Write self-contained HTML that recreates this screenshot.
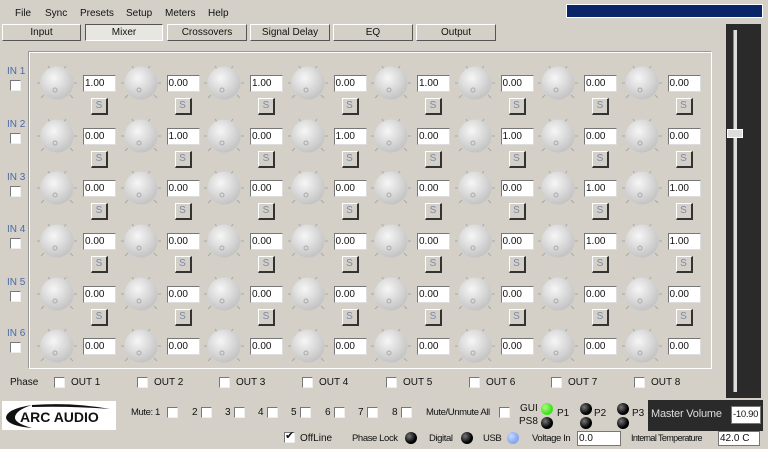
<!DOCTYPE html>
<html><head><meta charset="utf-8"><style>
*{box-sizing:border-box;margin:0;padding:0}
body{width:768px;height:449px;background:#d4d0c8;font-family:"Liberation Sans",sans-serif;font-size:11px;color:#111;position:relative;overflow:hidden}
.a{position:absolute;white-space:nowrap}
.menu span{position:absolute;top:8px;font-size:10px}
.tab{position:absolute;top:24px;height:17px;border:1px solid #fff;border-right-color:#555;border-bottom-color:#555;text-align:center;font-size:10px;line-height:15px;background:#d4d0c8}
.panel{position:absolute;left:29px;top:52px;width:683px;height:317px;border:1px solid #fff;box-shadow:-1px -1px 0 #999}
.grid{position:absolute;left:36px;top:62px;display:grid;grid-template-columns:repeat(8,83.5px);grid-template-rows:repeat(6,52.7px)}
.c{position:relative}
.c svg{position:absolute;left:0;top:0;width:42px;height:42px}
.tb{position:absolute;left:47px;top:13px;width:33px;height:17px;background:#fff;border:1px solid #777;border-right-color:#ddd;border-bottom-color:#ddd;font-size:10px;line-height:15px;padding-left:1px}
.s{position:absolute;left:55px;top:36px;width:17px;height:17px;border:1px solid #fff;border-right:2px solid #333;border-bottom:2px solid #333;color:#7a8aa8;font-size:10px;text-align:center;line-height:14px}
.cb{position:absolute;width:11px;height:11px;background:#fff;border:1px solid #777;border-right-color:#eee;border-bottom-color:#eee}
.in{color:#4a6aa8;font-size:10px}
.led{position:absolute;width:12px;height:12px;border-radius:50%;background:radial-gradient(circle at 35% 35%,#777,#000 60%)}
.n{letter-spacing:-0.4px;font-size:9.5px}
</style></head><body>
<svg width="0" height="0" style="position:absolute"><defs>
<radialGradient id="g" cx="40%" cy="35%" r="65%"><stop offset="0" stop-color="#f6f6f6"/><stop offset="1" stop-color="#c4c4c4"/></radialGradient>
<symbol id="kn" viewBox="0 0 42 42"><g stroke="#a8a8a8" stroke-width="1"><line x1="1" y1="21" x2="4" y2="21"/><line x1="38" y1="21" x2="41" y2="21"/><line x1="12" y1="4" x2="14" y2="7"/><line x1="30" y1="4" x2="28" y2="7"/><line x1="5" y1="36" x2="8" y2="33"/><line x1="37" y1="36" x2="34" y2="33"/></g><circle cx="21" cy="21" r="16.5" fill="url(#g)"/><circle cx="19" cy="28" r="2" fill="none" stroke="#aaa"/></symbol></defs></svg>
<div class="menu"><span style="left:15px">File</span><span style="left:45px">Sync</span><span style="left:80px">Presets</span><span style="left:126px">Setup</span><span style="left:165px">Meters</span><span style="left:208px">Help</span></div>
<div class="a" style="left:566px;top:4px;width:197px;height:14px;background:#0a246a;border:1px solid #fff"></div>
<div class="tab" style="left:2px;width:79px">Input</div>
<div class="tab" style="left:85px;width:78px;background:#e8e6e0;border-color:#555 #fff #fff #555">Mixer</div>
<div class="tab" style="left:167px;width:80px">Crossovers</div>
<div class="tab" style="left:250px;width:80px">Signal Delay</div>
<div class="tab" style="left:333px;width:80px">EQ</div>
<div class="tab" style="left:416px;width:80px">Output</div>
<div class="a" style="left:726px;top:24px;width:35px;height:374px;background:#2a2a2a"></div>
<div class="a" style="left:733px;top:30px;width:4px;height:362px;background:#ddd;border-left:1px solid #888"></div>
<div class="a" style="left:727px;top:129px;width:16px;height:9px;background:#ddd;border:1px solid #fff"></div>
<div class="panel"></div>
<div class="a in" style="left:7px;top:66px">IN 1</div><div class="cb" style="left:10px;top:80px"></div>
<div class="a in" style="left:7px;top:119px">IN 2</div><div class="cb" style="left:10px;top:133px"></div>
<div class="a in" style="left:7px;top:172px">IN 3</div><div class="cb" style="left:10px;top:186px"></div>
<div class="a in" style="left:7px;top:224px">IN 4</div><div class="cb" style="left:10px;top:238px"></div>
<div class="a in" style="left:7px;top:277px">IN 5</div><div class="cb" style="left:10px;top:291px"></div>
<div class="a in" style="left:7px;top:328px">IN 6</div><div class="cb" style="left:10px;top:342px"></div>
<div class="grid">
<div class="c"><svg><use href="#kn"/></svg><div class="tb">1.00</div><div class="s">S</div></div>
<div class="c"><svg><use href="#kn"/></svg><div class="tb">0.00</div><div class="s">S</div></div>
<div class="c"><svg><use href="#kn"/></svg><div class="tb">1.00</div><div class="s">S</div></div>
<div class="c"><svg><use href="#kn"/></svg><div class="tb">0.00</div><div class="s">S</div></div>
<div class="c"><svg><use href="#kn"/></svg><div class="tb">1.00</div><div class="s">S</div></div>
<div class="c"><svg><use href="#kn"/></svg><div class="tb">0.00</div><div class="s">S</div></div>
<div class="c"><svg><use href="#kn"/></svg><div class="tb">0.00</div><div class="s">S</div></div>
<div class="c"><svg><use href="#kn"/></svg><div class="tb">0.00</div><div class="s">S</div></div>
<div class="c"><svg><use href="#kn"/></svg><div class="tb">0.00</div><div class="s">S</div></div>
<div class="c"><svg><use href="#kn"/></svg><div class="tb">1.00</div><div class="s">S</div></div>
<div class="c"><svg><use href="#kn"/></svg><div class="tb">0.00</div><div class="s">S</div></div>
<div class="c"><svg><use href="#kn"/></svg><div class="tb">1.00</div><div class="s">S</div></div>
<div class="c"><svg><use href="#kn"/></svg><div class="tb">0.00</div><div class="s">S</div></div>
<div class="c"><svg><use href="#kn"/></svg><div class="tb">1.00</div><div class="s">S</div></div>
<div class="c"><svg><use href="#kn"/></svg><div class="tb">0.00</div><div class="s">S</div></div>
<div class="c"><svg><use href="#kn"/></svg><div class="tb">0.00</div><div class="s">S</div></div>
<div class="c"><svg><use href="#kn"/></svg><div class="tb">0.00</div><div class="s">S</div></div>
<div class="c"><svg><use href="#kn"/></svg><div class="tb">0.00</div><div class="s">S</div></div>
<div class="c"><svg><use href="#kn"/></svg><div class="tb">0.00</div><div class="s">S</div></div>
<div class="c"><svg><use href="#kn"/></svg><div class="tb">0.00</div><div class="s">S</div></div>
<div class="c"><svg><use href="#kn"/></svg><div class="tb">0.00</div><div class="s">S</div></div>
<div class="c"><svg><use href="#kn"/></svg><div class="tb">0.00</div><div class="s">S</div></div>
<div class="c"><svg><use href="#kn"/></svg><div class="tb">1.00</div><div class="s">S</div></div>
<div class="c"><svg><use href="#kn"/></svg><div class="tb">1.00</div><div class="s">S</div></div>
<div class="c"><svg><use href="#kn"/></svg><div class="tb">0.00</div><div class="s">S</div></div>
<div class="c"><svg><use href="#kn"/></svg><div class="tb">0.00</div><div class="s">S</div></div>
<div class="c"><svg><use href="#kn"/></svg><div class="tb">0.00</div><div class="s">S</div></div>
<div class="c"><svg><use href="#kn"/></svg><div class="tb">0.00</div><div class="s">S</div></div>
<div class="c"><svg><use href="#kn"/></svg><div class="tb">0.00</div><div class="s">S</div></div>
<div class="c"><svg><use href="#kn"/></svg><div class="tb">0.00</div><div class="s">S</div></div>
<div class="c"><svg><use href="#kn"/></svg><div class="tb">1.00</div><div class="s">S</div></div>
<div class="c"><svg><use href="#kn"/></svg><div class="tb">1.00</div><div class="s">S</div></div>
<div class="c"><svg><use href="#kn"/></svg><div class="tb">0.00</div><div class="s">S</div></div>
<div class="c"><svg><use href="#kn"/></svg><div class="tb">0.00</div><div class="s">S</div></div>
<div class="c"><svg><use href="#kn"/></svg><div class="tb">0.00</div><div class="s">S</div></div>
<div class="c"><svg><use href="#kn"/></svg><div class="tb">0.00</div><div class="s">S</div></div>
<div class="c"><svg><use href="#kn"/></svg><div class="tb">0.00</div><div class="s">S</div></div>
<div class="c"><svg><use href="#kn"/></svg><div class="tb">0.00</div><div class="s">S</div></div>
<div class="c"><svg><use href="#kn"/></svg><div class="tb">0.00</div><div class="s">S</div></div>
<div class="c"><svg><use href="#kn"/></svg><div class="tb">0.00</div><div class="s">S</div></div>
<div class="c"><svg><use href="#kn"/></svg><div class="tb">0.00</div></div>
<div class="c"><svg><use href="#kn"/></svg><div class="tb">0.00</div></div>
<div class="c"><svg><use href="#kn"/></svg><div class="tb">0.00</div></div>
<div class="c"><svg><use href="#kn"/></svg><div class="tb">0.00</div></div>
<div class="c"><svg><use href="#kn"/></svg><div class="tb">0.00</div></div>
<div class="c"><svg><use href="#kn"/></svg><div class="tb">0.00</div></div>
<div class="c"><svg><use href="#kn"/></svg><div class="tb">0.00</div></div>
<div class="c"><svg><use href="#kn"/></svg><div class="tb">0.00</div></div>
</div>
<div class="a" style="left:10px;top:377px;font-size:10px">Phase</div>
<div class="cb" style="left:54px;top:377px"></div><div class="a" style="left:71px;top:377px;font-size:10px">OUT 1</div>
<div class="cb" style="left:137px;top:377px"></div><div class="a" style="left:154px;top:377px;font-size:10px">OUT 2</div>
<div class="cb" style="left:219px;top:377px"></div><div class="a" style="left:236px;top:377px;font-size:10px">OUT 3</div>
<div class="cb" style="left:302px;top:377px"></div><div class="a" style="left:319px;top:377px;font-size:10px">OUT 4</div>
<div class="cb" style="left:386px;top:377px"></div><div class="a" style="left:403px;top:377px;font-size:10px">OUT 5</div>
<div class="cb" style="left:469px;top:377px"></div><div class="a" style="left:486px;top:377px;font-size:10px">OUT 6</div>
<div class="cb" style="left:551px;top:377px"></div><div class="a" style="left:568px;top:377px;font-size:10px">OUT 7</div>
<div class="cb" style="left:634px;top:377px"></div><div class="a" style="left:651px;top:377px;font-size:10px">OUT 8</div>
<div class="a" style="left:2px;top:401px;width:114px;height:29px;background:#fff"></div>
<svg class="a" style="left:2px;top:401px" width="114" height="29"><path d="M30 4 Q4 8 4 17 Q6 25 30 27 Q12 22 13 16 Q14 9 30 4Z" fill="#111"/><path d="M30 4 Q70 1 108 8 Q70 5 30 6Z" fill="#111"/><text x="18" y="21" font-family="Liberation Sans" font-weight="bold" font-size="14" fill="#111">ARC AUDIO</text></svg>
<div class="a n" style="left:131px;top:407px">Mute: 1</div><div class="cb" style="left:167px;top:407px"></div>
<div class="a" style="left:192px;top:407px;font-size:10px">2</div><div class="cb" style="left:201px;top:407px"></div>
<div class="a" style="left:225px;top:407px;font-size:10px">3</div><div class="cb" style="left:234px;top:407px"></div>
<div class="a" style="left:258px;top:407px;font-size:10px">4</div><div class="cb" style="left:267px;top:407px"></div>
<div class="a" style="left:291px;top:407px;font-size:10px">5</div><div class="cb" style="left:300px;top:407px"></div>
<div class="a" style="left:325px;top:407px;font-size:10px">6</div><div class="cb" style="left:334px;top:407px"></div>
<div class="a" style="left:358px;top:407px;font-size:10px">7</div><div class="cb" style="left:367px;top:407px"></div>
<div class="a" style="left:392px;top:407px;font-size:10px">8</div><div class="cb" style="left:401px;top:407px"></div>
<div class="a n" style="left:426px;top:407px">Mute/Unmute All</div><div class="cb" style="left:499px;top:407px"></div>
<div class="a" style="left:520px;top:403px;font-size:10px">GUI</div><div class="a" style="left:519px;top:416px;font-size:10px">PS8</div>
<div class="led" style="left:541px;top:403px;background:radial-gradient(circle at 35% 35%,#b0ff80,#40e020 60%)"></div>
<div class="led" style="left:541px;top:417px"></div>
<div class="a" style="left:557px;top:408px;font-size:10px">P1</div>
<div class="led" style="left:580px;top:403px"></div><div class="led" style="left:580px;top:417px"></div>
<div class="a" style="left:594px;top:408px;font-size:10px">P2</div>
<div class="led" style="left:617px;top:403px"></div><div class="led" style="left:617px;top:417px"></div>
<div class="a" style="left:632px;top:408px;font-size:10px">P3</div>
<div class="a" style="left:648px;top:400px;width:115px;height:31px;background:#2a2a2a"></div>
<div class="a" style="left:651px;top:408px;font-size:11px;letter-spacing:-0.2px;color:#ddd">Master Volume</div>
<div class="a" style="left:731px;top:406px;width:30px;height:18px;background:#fff;border:1px solid #777;font-size:9.5px;letter-spacing:-0.3px;line-height:16px;padding-left:1px">-10.90</div>
<div class="cb" style="left:284px;top:432px"></div><div class="a" style="left:285px;top:429px;font-size:11px">✔</div>
<div class="a" style="left:300px;top:433px;font-size:10px">OffLine</div>
<div class="a n" style="left:352px;top:433px">Phase Lock</div><div class="led" style="left:405px;top:432px"></div>
<div class="a n" style="left:429px;top:433px">Digital</div><div class="led" style="left:461px;top:432px"></div>
<div class="a n" style="left:483px;top:433px">USB</div><div class="led" style="left:507px;top:432px;background:radial-gradient(circle at 35% 35%,#c8d8ff,#88a8f0 60%)"></div>
<div class="a n" style="left:532px;top:433px">Voltage In</div>
<div class="a" style="left:577px;top:431px;width:44px;height:15px;background:#fff;border:1px solid #777;font-size:10px;line-height:13px;padding-left:1px">0.0</div>
<div class="a n" style="left:631px;top:433px;letter-spacing:-0.6px;font-size:9px">Internal Temperature</div>
<div class="a" style="left:718px;top:431px;width:42px;height:15px;background:#fff;border:1px solid #777;font-size:10px;line-height:13px;padding-left:1px">42.0 C</div>
</body></html>
